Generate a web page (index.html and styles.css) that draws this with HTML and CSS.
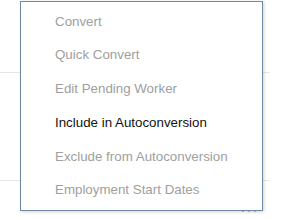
FILE: index.html
```html
<!DOCTYPE html>
<html>
<head>
	<title>actions menu</title>
	<link rel="stylesheet" href="styles.css">
</head>
<body>
	<div class="list">
		<div class="row row-top"></div>
		<div class="row row-mid"></div>
		<div class="row row-low">
			<span class="more"><i></i><i></i><i></i></span>
		</div>
	</div>
	<ul class="menu">
		<li class="off">Convert</li>
		<li class="off">Quick Convert</li>
		<li class="off">Edit Pending Worker</li>
		<li>Include in Autoconversion</li>
		<li class="off">Exclude from Autoconversion</li>
		<li class="off">Employment Start Dates</li>
	</ul>
</body>
</html>
```

FILE: styles.css
```css
*{
	margin: 0px;
	padding: 0px;
}
ul,li{
	list-style: none;
}
body{
	background: #fff;
	font-family: "Liberation Sans", Arial, sans-serif;
	position: relative;
	width: 289px;
	height: 219px;
	overflow: hidden;
}
.list{
	width: 270px;
}
.row{
	border-bottom: 1px solid #e6e6e6;
}
.row-top{
	height: 72px;
}
.row-mid{
	height: 107px;
}
.row-low{
	height: 38px;
	border-bottom: none;
	display: flex;
	justify-content: flex-end;
	padding-right: 14px;
}
.more{
	display: flex;
	gap: 4px;
	margin-top: 28px;
}
.more i{
	display: block;
	width: 2px;
	height: 3px;
	background: #c4c4c4;
}
.menu{
	position: absolute;
	left: 20px;
	top: 1px;
	width: 241px;
	padding: 2.5px 0;
	background: #fff;
	border: 1px solid #6f8aa4;
	box-shadow: 1px 1px 3px rgba(0,0,0,0.18);
}
.menu li{
	height: 33.8px;
	line-height: 33.8px;
	padding-left: 34px;
	font-size: 13.33px;
	color: #111;
	white-space: nowrap;
}
.menu .off{
	color: #a0a0a0;
}
```
